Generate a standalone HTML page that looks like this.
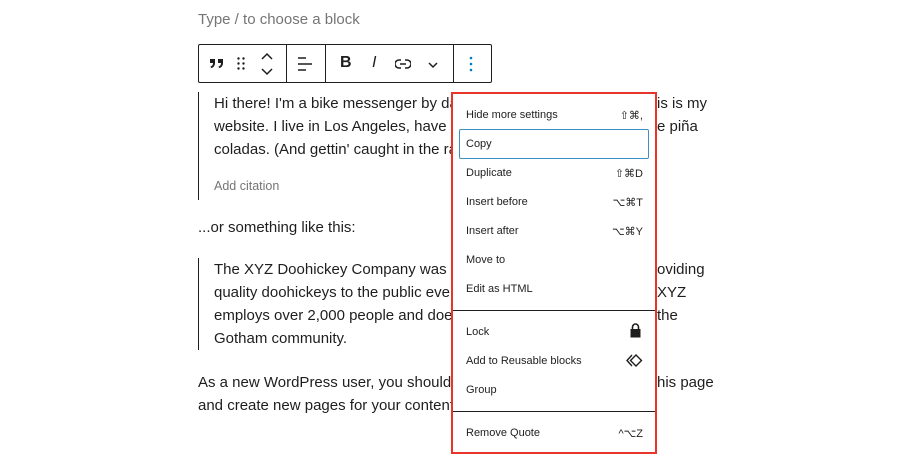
<!DOCTYPE html>
<html><head><style>
body{margin:0;width:915px;height:468px;background:#fff;font-family:"Liberation Sans",sans-serif;color:#1e1e1e;position:relative;overflow:hidden}
.a{position:absolute;white-space:nowrap}
.p{font-size:15px}
.tb{position:absolute;left:198px;top:44px;width:292px;height:37px;border:1px solid #1e1e1e;border-radius:2px;background:#fff}
.sep{position:absolute;top:0;width:1px;height:37px;background:#1e1e1e}
.menu{position:absolute;left:451px;top:92px;width:202px;height:358px;border:2px solid #e8352a;background:#fff}
.mi{position:absolute;left:13px;font-size:11px;color:#1e1e1e}
.sc{position:absolute;right:12px;font-size:11px;color:#1e1e1e}
.hr{position:absolute;left:0;width:202px;height:1px;background:#1e1e1e}
</style></head><body>
<div class="a" style="left:198px;top:11px;font-size:15px;color:#757575">Type / to choose a block</div>
<div class="tb">
<svg class="a" style="left:10px;top:11px" width="16" height="14" viewBox="0 0 16 14"><path d="M1 3h5v4c0 3-2 5-4 5l-.5-1.5C3 10 4 9 4 7H1z M9 3h5v4c0 3-2 5-4 5l-.5-1.5C11 10 12 9 12 7H9z" fill="#1e1e1e"/></svg>
<svg class="a" style="left:38px;top:12px" width="8" height="13"><g fill="#1e1e1e"><circle cx="1.5" cy="1.5" r="1.2"/><circle cx="6.5" cy="1.5" r="1.2"/><circle cx="1.5" cy="6.5" r="1.2"/><circle cx="6.5" cy="6.5" r="1.2"/><circle cx="1.5" cy="11.5" r="1.2"/><circle cx="6.5" cy="11.5" r="1.2"/></g></svg>
<svg class="a" style="left:61px;top:7px" width="14" height="24"><path d="M2 7l5-5 5 5M2 17l5 5 5-5" stroke="#1e1e1e" stroke-width="1.5" fill="none"/></svg>
<div class="sep" style="left:87px"></div>
<svg class="a" style="left:98px;top:11px" width="16" height="16"><path d="M1 2h8M1 8h14M1 14h8" stroke="#1e1e1e" stroke-width="1.5"/></svg>
<div class="sep" style="left:126px"></div>
<div class="a" style="left:141px;top:9px;font-size:16px;font-weight:bold">B</div>
<div class="a" style="left:173px;top:9px;font-size:16px;font-style:italic">I</div>
<svg class="a" style="left:196px;top:13px" width="16" height="12"><path d="M6 2H4a4 4 0 000 8h2M10 2h2a4 4 0 010 8h-2M5 6h6" stroke="#1e1e1e" stroke-width="1.5" fill="none"/></svg>
<svg class="a" style="left:228px;top:16px" width="12" height="8"><path d="M2 2l4 4 4-4" stroke="#1e1e1e" stroke-width="1.5" fill="none"/></svg>
<div class="sep" style="left:254px"></div>
<svg class="a" style="left:270px;top:11px" width="4" height="16"><g fill="#007cba"><circle cx="2" cy="2" r="1.3"/><circle cx="2" cy="8" r="1.3"/><circle cx="2" cy="14" r="1.3"/></g></svg>
</div>
<div class="a" style="left:198px;top:92px;width:1px;height:108px;background:#1e1e1e"></div>
<div class="a p" style="left:214px;top:95px">Hi there! I'm a bike messenger by day</div>
<div class="a p" style="left:214px;top:118px">website. I live in Los Angeles, have a</div>
<div class="a p" style="left:214px;top:141px">coladas. (And gettin' caught in the ra</div>
<div class="a" style="left:214px;top:179px;font-size:12.5px;color:#757575">Add citation</div>
<div class="a p" style="left:198px;top:219px">...or something like this:</div>
<div class="a" style="left:198px;top:258px;width:1px;height:92px;background:#1e1e1e"></div>
<div class="a p" style="left:214px;top:261px">The XYZ Doohickey Company was fo</div>
<div class="a p" style="left:214px;top:284px">quality doohickeys to the public ever</div>
<div class="a p" style="left:214px;top:307px">employs over 2,000 people and does</div>
<div class="a p" style="left:214px;top:330px">Gotham community.</div>
<div class="a p" style="left:198px;top:374px">As a new WordPress user, you should g</div>
<div class="a p" style="left:198px;top:397px">and create new pages for your content.</div>
<div class="a p" style="left:657px;top:95px">is is my</div>
<div class="a p" style="left:657px;top:118px">e piña</div>
<div class="a p" style="left:657px;top:261px">oviding</div>
<div class="a p" style="left:657px;top:284px">XYZ</div>
<div class="a p" style="left:657px;top:307px">the</div>
<div class="a p" style="left:657px;top:374px">his page</div>
<div class="menu">
<div class="mi" style="top:15px">Hide more settings</div><div class="sc" style="top:15px">⇧⌘,</div>
<div class="a" style="left:6px;top:35px;width:188px;height:28px;border:1.5px solid #3d8fc1;border-radius:2px"></div>
<div class="mi" style="top:44px">Copy</div>
<div class="mi" style="top:73px">Duplicate</div><div class="sc" style="top:73px">⇧⌘D</div>
<div class="mi" style="top:102px">Insert before</div><div class="sc" style="top:102px">⌥⌘T</div>
<div class="mi" style="top:131px">Insert after</div><div class="sc" style="top:131px">⌥⌘Y</div>
<div class="mi" style="top:160px">Move to</div>
<div class="mi" style="top:189px">Edit as HTML</div>
<div class="hr" style="top:216px"></div>
<div class="mi" style="top:232px">Lock</div>
<svg class="a" style="right:14px;top:229px" width="11" height="15"><path d="M2.5 6V4a3 3 0 016 0v2" stroke="#1e1e1e" stroke-width="1.6" fill="none"/><rect x="0.5" y="6" width="10" height="8.5" fill="#1e1e1e"/></svg>
<div class="mi" style="top:261px">Add to Reusable blocks</div>
<svg class="a" style="right:12px;top:260px" width="17" height="13"><path d="M6 1L1 6.5 6 12M10 1l5.5 5.5L10 12 4.5 6.5z" stroke="#1e1e1e" stroke-width="1.4" fill="none"/></svg>
<div class="mi" style="top:290px">Group</div>
<div class="hr" style="top:317px"></div>
<div class="mi" style="top:333px">Remove Quote</div><div class="sc" style="top:333px">^⌥Z</div>
</div>
</body></html>
